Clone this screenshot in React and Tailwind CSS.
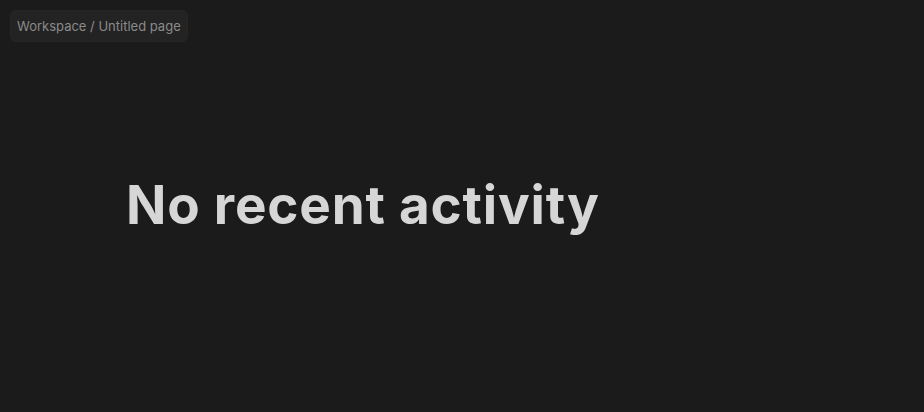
import React from 'react';

const App = () => {
  return (
    <div className="min-h-screen h-[412px] w-full bg-[#1b1b1b] font-['Inter','Noto_Sans',sans-serif] overflow-hidden">
      <div className="px-2.5 pt-2.5">
        <div className="inline-flex items-center h-8 px-1.5 rounded-md bg-[#232323] border border-[#262626]">
          <span className="text-[13px] leading-4 text-[#8a8a8a] whitespace-nowrap">
            Workspace / Untitled page
          </span>
        </div>
      </div>

      <div className="mt-[137px] pl-[126px]">
        <h1 className="text-[53px] leading-none font-bold tracking-[0.8px] text-[#d6d6d6] whitespace-nowrap">
          No recent activity
        </h1>
      </div>
    </div>
  );
};

export default App;
